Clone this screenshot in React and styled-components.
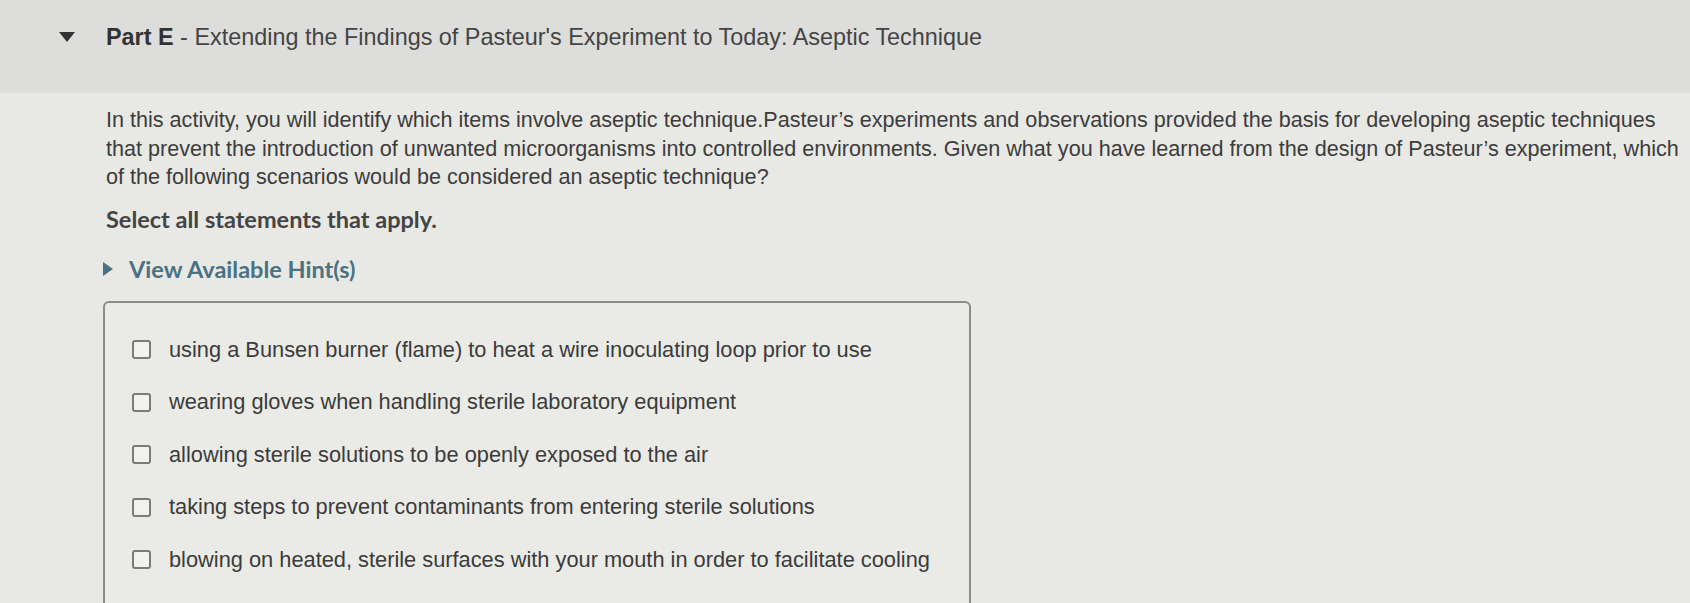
import React from 'react';
import styled, { createGlobalStyle } from 'styled-components';

const GlobalStyle = createGlobalStyle`
  html, body {
    margin: 0;
    padding: 0;
    overflow: hidden;
    background: #e8e8e4;
  }
  body {
    font-family: 'Liberation Sans', Arial, sans-serif;
    color: #3f3f3f;
  }
`;

const Page = styled.div`
  width: 1690px;
  height: 603px;
  overflow: hidden;
`;

const PartHeader = styled.div`
  height: 93px;
  box-sizing: border-box;
  padding: 22px 0 0 59px;
  background: #dddedb;
  display: flex;
  align-items: flex-start;
`;

const Caret = styled.svg`
  width: 16px;
  height: 10px;
  margin-top: 10px;
  margin-right: 31px;
  flex-shrink: 0;
  fill: ${(props) => props.color || '#333'};
`;

const PartTitle = styled.h2`
  margin: 0;
  font-size: 23.4px;
  line-height: 30px;
  font-weight: normal;
  color: #444;
  white-space: nowrap;

  b {
    font-weight: bold;
    color: #333;
  }
`;

const Content = styled.div`
  padding: 13px 0 0 106px;
  width: 1588px;
`;

const Prompt = styled.p`
  margin: 0;
  font-size: 21.6px;
  line-height: 28.5px;
  color: #3c3c3c;
`;

const Instruction = styled.p`
  margin: 13px 0 0;
  font-family: 'Lato', 'Liberation Sans', sans-serif;
  font-weight: bold;
  font-size: 23.5px;
  line-height: 28px;
  color: #444;
`;

const HintToggle = styled.div`
  margin: 22px 0 0 -3px;
  display: flex;
  align-items: center;
  font-family: 'Lato', 'Liberation Sans', sans-serif;
  font-weight: bold;
  font-size: 23.5px;
  line-height: 28px;
  color: #4a7283;
`;

const HintCaret = styled.svg`
  width: 10px;
  height: 14px;
  margin-right: 16px;
  fill: #4a7283;
`;

const AnswerBox = styled.div`
  margin: 18px 0 0 -3px;
  width: 868px;
  height: 320px;
  box-sizing: border-box;
  border: 2px solid #8b8c88;
  border-radius: 6px;
  background: #eaeae6;
  padding: 21px 0 0 27px;
`;

const Option = styled.label`
  display: flex;
  align-items: center;
  height: 52.5px;
  font-size: 21.8px;
  color: #3b3b3b;
  cursor: pointer;
`;

const Box = styled.span`
  width: 19px;
  height: 19px;
  box-sizing: border-box;
  border: 2px solid #7b7b79;
  border-radius: 3px;
  background: #f1f1ee;
  margin-right: 18px;
  flex-shrink: 0;
`;

const options = [
  'using a Bunsen burner (flame) to heat a wire inoculating loop prior to use',
  'wearing gloves when handling sterile laboratory equipment',
  'allowing sterile solutions to be openly exposed to the air',
  'taking steps to prevent contaminants from entering sterile solutions',
  'blowing on heated, sterile surfaces with your mouth in order to facilitate cooling',
];

export default function App() {
  return (
    <Page>
      <GlobalStyle />
      <PartHeader>
        <Caret viewBox="0 0 16 10" color="#333">
          <polygon points="0,0 16,0 8,10" />
        </Caret>
        <PartTitle>
          <b>Part E</b> - Extending the Findings of Pasteur's Experiment to Today: Aseptic Technique
        </PartTitle>
      </PartHeader>
      <Content>
        <Prompt>
          In this activity, you will identify which items involve aseptic technique.Pasteur’s experiments and
          observations provided the basis for developing aseptic techniques that prevent the introduction of
          unwanted microorganisms into controlled environments. Given what you have learned from the design of
          Pasteur’s experiment, which of the following scenarios would be considered an aseptic technique?
        </Prompt>
        <Instruction>Select all statements that apply.</Instruction>
        <HintToggle>
          <HintCaret viewBox="0 0 10 14">
            <polygon points="0,0 10,7 0,14" />
          </HintCaret>
          View Available Hint(s)
        </HintToggle>
        <AnswerBox>
          {options.map((text) => (
            <Option key={text}>
              <Box />
              {text}
            </Option>
          ))}
        </AnswerBox>
      </Content>
    </Page>
  );
}
